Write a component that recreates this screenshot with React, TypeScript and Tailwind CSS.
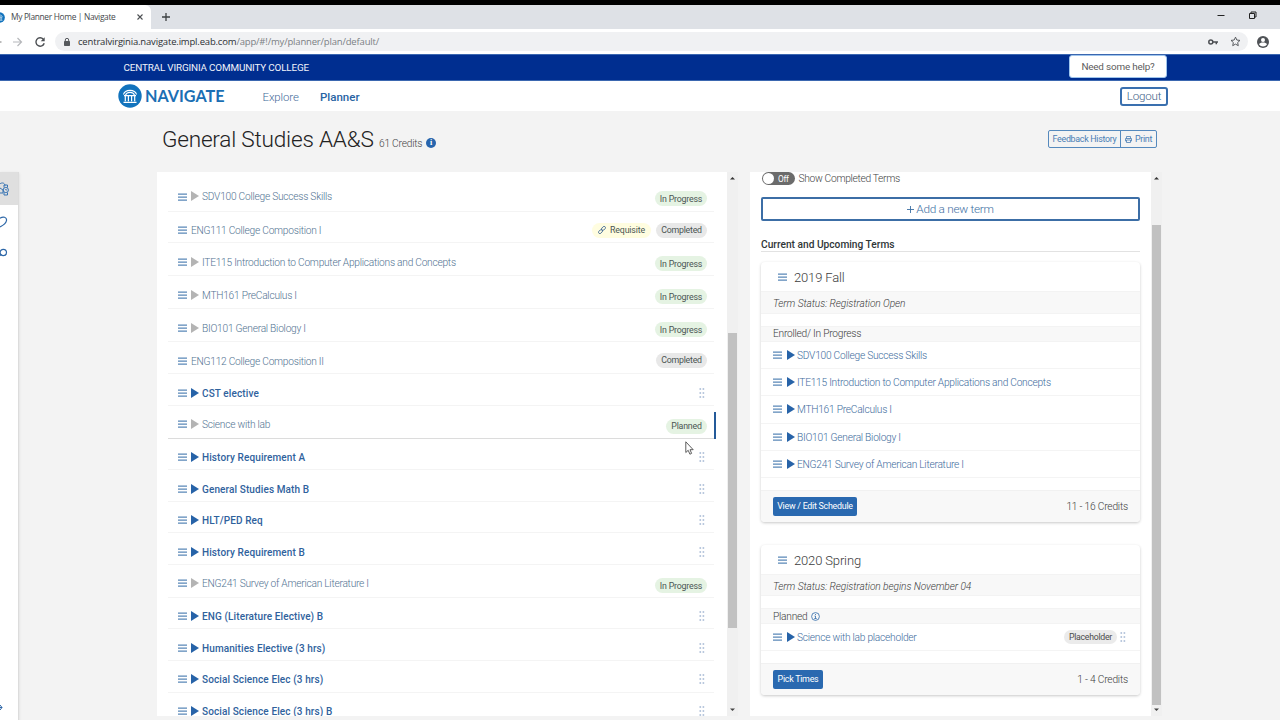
import React from 'react';

type Badge = 'progress' | 'completed' | 'requisite' | 'planned';

interface Course {
  title: string;
  badge?: Badge;
  open?: boolean;
  arrow?: boolean;
}

const COURSES: Course[] = [
  { title: 'SDV100 College Success Skills', badge: 'progress', arrow: true },
  { title: 'ENG111 College Composition I', badge: 'requisite' },
  { title: 'ITE115 Introduction to Computer Applications and Concepts', badge: 'progress', arrow: true },
  { title: 'MTH161 PreCalculus I', badge: 'progress', arrow: true },
  { title: 'BIO101 General Biology I', badge: 'progress', arrow: true },
  { title: 'ENG112 College Composition II', badge: 'completed' },
  { title: 'CST elective', arrow: true, open: true },
  { title: 'Science with lab', badge: 'planned', arrow: true },
  { title: 'History Requirement A', arrow: true, open: true },
  { title: 'General Studies Math B', arrow: true, open: true },
  { title: 'HLT/PED Req', arrow: true, open: true },
  { title: 'History Requirement B', arrow: true, open: true },
  { title: 'ENG241 Survey of American Literature I', badge: 'progress', arrow: true },
  { title: 'ENG (Literature Elective) B', arrow: true, open: true },
  { title: 'Humanities Elective (3 hrs)', arrow: true, open: true },
  { title: 'Social Science Elec (3 hrs)', arrow: true, open: true },
  { title: 'Social Science Elec (3 hrs) B', arrow: true, open: true },
];

const ENROLLED = [
  'SDV100 College Success Skills',
  'ITE115 Introduction to Computer Applications and Concepts',
  'MTH161 PreCalculus I',
  'BIO101 General Biology I',
  'ENG241 Survey of American Literature I',
];

const Burger = () => (
  <svg className="h-[8px] w-[9px] shrink-0" viewBox="0 0 9 8">
    <path d="M0 1.2h9M0 4.2h9M0 7.2h9" stroke="#5a88b8" strokeWidth="1.2" />
  </svg>
);

const Arrow = ({ active }: { active?: boolean }) => (
  <svg className="h-[10px] w-[8px] shrink-0" viewBox="0 0 8 10">
    <path d="M0 0 8 5 0 10z" fill={active ? '#2763a8' : '#b4b4b4'} />
  </svg>
);

const Grip = () => (
  <svg className="h-[10px] w-[6px] shrink-0" viewBox="0 0 6 10">
    {[0, 4, 8].map((y) => (
      <path key={y} d={`M.5 ${y + 1}h1.6M3.6 ${y + 1}h1.6`} stroke="#a3b6d2" strokeWidth="1.5" />
    ))}
  </svg>
);

const College = ({ className }: { className: string }) => (
  <svg className={className} viewBox="0 0 24 24">
    <circle cx="12" cy="12" r="11.7" fill="#1273bd" />
    <path d="M5.5 10.5C7 5 17 5 18.5 10.5M7.5 11c1.5-3.5 7.5-3.5 9 0" fill="none" stroke="#fff" strokeWidth="1.1" />
    <path d="M6 11.7h12M7.3 12v5.300M10.4 12v5.300M13.6 12v5.300M16.7 12v5.300M5.5 18.300h13" stroke="#fff" strokeWidth="1.2" />
  </svg>
);

const Pill = ({ kind }: { kind: Badge }) => {
  if (kind === 'progress' || kind === 'planned') {
    return (
      <span
        className={`mt-[4px] flex h-[15px] items-center justify-center rounded-full bg-[#e5f3e3] pt-px text-[8.8px] tracking-[-0.2px] text-[#4b5553] ${
          kind === 'progress' ? 'w-[52px]' : 'w-[41px]'
        }`}
      >
        {kind === 'progress' ? 'In Progress' : 'Planned'}
      </span>
    );
  }
  return (
    <>
      {kind === 'requisite' && (
        <span className="mr-[5px] flex h-[15px] w-[59px] items-center justify-center gap-[4px] rounded-full bg-[#fffde0] text-[8.8px] tracking-[-0.16px] text-[#4b5553]">
          <svg className="h-[8px] w-[8px]" viewBox="0 0 16 16" fill="none" stroke="#35608f" strokeWidth="1.6">
            <rect x="6.5" y="2" width="9" height="5.5" rx="2.7" transform="rotate(-45 11 4.75)" />
            <rect x=".5" y="8.5" width="9" height="5.5" rx="2.7" transform="rotate(-45 5 11.25)" />
          </svg>
          Requisite
        </span>
      )}
      <span className="flex h-[15px] w-[51px] items-center justify-center rounded-full bg-[#e8e8e8] text-[8.8px] tracking-[-0.22px] text-[#4b5553]">
        Completed
      </span>
    </>
  );
};

const rowHeight = (course: Course, index: number) => {
  if (index === 0) return 'h-[39.6px] pt-[6px]';
  if (course.badge === 'progress' || course.badge === 'planned') return 'h-[32.9px]';
  return course.badge ? 'h-[31.9px]' : 'h-[31.6px]';
};

const CourseRow = ({ course, index }: { course: Course; index: number }) => (
  <div
    className={`relative flex shrink-0 border-b ${rowHeight(course, index)} ${
      course.badge === 'planned' ? 'border-[#dcdcdc]' : 'border-[#f4f4f4]'
    }`}
  >
    <div className="flex h-[37px] w-full items-center pl-[10px]">
      <Burger />
      <div className="ml-[4px] flex items-center gap-[3px]">
        {course.arrow && <Arrow active={course.open} />}
        <span
          className={`pt-[2px] whitespace-nowrap ${
            course.open
              ? 'text-[10px] font-medium tracking-[0.11px] text-[#2f629d]'
              : 'text-[10.2px] font-light tracking-[-0.25px] text-[#527392]'
          }`}
        >
          {course.title}
        </span>
      </div>
      <div className="ml-auto flex items-center pr-[7px]">
        {course.badge ? (
          <Pill kind={course.badge} />
        ) : (
          <span className="pr-[2px]">
            <Grip />
          </span>
        )}
      </div>
    </div>
    {course.badge === 'planned' && <i className="absolute top-[6px] -right-[2px] h-[27px] w-[2px] bg-[#245a99]" />}
  </div>
);

const Scrollbar = ({ thumb }: { thumb: string }) => (
  <div className="flex w-[11px] shrink-0 flex-col items-center bg-[#f0f0f0] py-[4px]">
    <svg className="h-[4px] w-[5px]" viewBox="0 0 5 4">
      <path d="M0 3.5 2.5 1 5 3.5z" fill="#333" />
    </svg>
    <i className={`block w-[9px] bg-[#c1c1c1] ${thumb}`} />
    <svg className="mt-auto h-[4px] w-[5px]" viewBox="0 0 5 4">
      <path d="M0 .5h5L2.5 3z" fill="#444" />
    </svg>
  </div>
);

interface TermProps {
  name: string;
  status: string;
  statusHeight: string;
  section: React.ReactNode;
  courses: string[];
  placeholder?: boolean;
  action: string;
  actionWidth: string;
  credits: string;
}

const TermCard = ({ name, status, statusHeight, section, courses, placeholder, action, actionWidth, credits }: TermProps) => (
  <div className="flex flex-col rounded-[4px] bg-white font-light text-[#3c3c3c] shadow-[0_1px_3px_rgba(0,0,0,0.22)]">
    <div className="flex h-[29px] items-center gap-[7px] pl-[17px] text-[13px] tracking-[-0.15px]">
      <Burger />
      <span className="pt-[2px]">{name}</span>
    </div>
    <div
      className={`flex items-center border-y border-[#f3f3f3] bg-[#f8f8f8] pt-[3px] pl-[12px] text-[10.2px] tracking-[-0.08px] italic ${statusHeight}`}
    >
      {status}
    </div>
    <div className="h-[12px]" />
    <div className="flex h-[16px] items-center gap-[5px] border-y border-[#f3f3f3] bg-[#f8f8f8] pl-[12px] text-[10.2px] tracking-[-0.24px]">
      <span className="pt-[2px]">{section}</span>
    </div>
    {courses.map((course) => (
      <div key={course} className="flex h-[27.4px] items-center border-b border-[#f4f4f4] pl-[12px]">
        <Burger />
        <span className="ml-[5px]">
          <Arrow active />
        </span>
        <span className="ml-[2px] pt-[2px] text-[10.2px] tracking-[-0.25px] whitespace-nowrap text-[#3e6c9d]">{course}</span>
        {placeholder && (
          <div className="ml-auto flex items-center gap-[3px] pr-[14px]">
            <span className="flex h-[14px] w-[53px] items-center justify-center rounded-full bg-[#ebebeb] text-[8.7px] font-normal tracking-[-0.26px] text-[#4b4b4b]">
              Placeholder
            </span>
            <Grip />
          </div>
        )}
      </div>
    ))}
    <div className="h-[12px]" />
    <div className="flex h-[32px] items-center justify-between rounded-b-[4px] border-t border-[#f1f1f1] bg-[#f8f8f8] px-[12px]">
      <button
        className={`mb-px h-[19px] rounded-[2px] bg-[#2a69b0] text-[8.9px] font-normal tracking-[-0.26px] whitespace-nowrap text-white ${actionWidth}`}
      >
        {action}
      </button>
      <span className="text-[10.2px] tracking-[-0.2px]">{credits}</span>
    </div>
  </div>
);

const BrowserChrome = () => (
  <>
    <div className="h-[5px] bg-black" />
    <div className="flex h-[24px] bg-[#dee1e6]">
      <div className="flex w-[151px] items-center rounded-tr-[6px] bg-white font-['Open_Sans',sans-serif]">
        <College className="-ml-[6px] h-[11px] w-[11px] shrink-0" />
        <span className="ml-[6px] w-[105px] text-[8.4px] tracking-[-0.33px] whitespace-nowrap text-[#45484c]">
          My Planner Home | Navigate
        </span>
        <svg className="ml-[21px] h-[6px] w-[6px]" viewBox="0 0 6 6">
          <path d="m.5.5 5 5m0-5-5 5" stroke="#4c4f53" strokeWidth="1.1" />
        </svg>
      </div>
      <svg className="mt-[8px] ml-[11px] h-[8px] w-[8px]" viewBox="0 0 8 8">
        <path d="M4 0v8M0 4h8" stroke="#3c4043" strokeWidth="1.3" />
      </svg>
      <svg className="mt-[6px] mr-[23px] ml-auto h-[9px] w-[40px]" viewBox="0 0 40 9" fill="none" stroke="#222">
        <path d="M.5 4.5h7M32.5 2.5h5v5h-5zM34 2.5v-1.5h5v5h-1.5" />
      </svg>
    </div>
    <div className="flex h-[25px] items-center bg-white">
      <svg className="h-[12px] w-[48px] shrink-0" viewBox="0 0 48 12" fill="none">
        <path d="M0 6h1.5" stroke="#777" />
        <path d="M13 6h8.5M17.5 2l4 4-4 4" stroke="#b6b8bb" strokeWidth="1.2" />
        <path d="M43.3 3.2A4.2 4.2 0 1 0 44.2 7.2" stroke="#4c4f53" strokeWidth="1.4" />
        <path d="M44.7 1.3v4h-4z" fill="#4c4f53" />
      </svg>
      <div className="ml-[7px] flex h-[19px] w-[1193px] items-center rounded-full bg-[#f0f1f3] font-['Open_Sans',sans-serif]">
        <svg className="ml-[9px] h-[8px] w-[6px]" viewBox="0 0 6 8">
          <rect y="3" width="6" height="5" rx=".7" fill="#56595d" />
          <path d="M1.3 3.5V2a1.7 1.7 0 0 1 3.4 0v1.5" fill="none" stroke="#56595d" />
        </svg>
        <span className="ml-[8px] text-[9.5px] tracking-[-0.18px] whitespace-nowrap text-[#7b7f84]">
          <span className="text-[#2c3034]">centralvirginia.navigate.impl.eab.com</span>/app/#!/my/planner/plan/default/
        </span>
        <svg className="ml-auto h-[8px] w-[10px]" viewBox="0 0 10 8" fill="none" stroke="#4c4f53" strokeWidth="1.5">
          <circle cx="2.8" cy="4" r="2" />
          <path d="M4.8 4H10M8.3 4v2.3" />
        </svg>
        <svg className="mr-[7px] ml-[12px] h-[11px] w-[11px]" viewBox="0 0 24 24" fill="none" stroke="#4c4f53" strokeWidth="2">
          <path d="m12 2.5 2.9 6.3 6.9.8-5.1 4.7 1.4 6.8L12 17.7l-6.1 3.4 1.4-6.8-5.1-4.700 6.900-.8z" />
        </svg>
      </div>
      <svg className="ml-[9px] h-[12px] w-[12px] shrink-0" viewBox="0 0 24 24">
        <circle cx="12" cy="12" r="12" fill="#505357" />
        <circle cx="12" cy="8" r="4" fill="#fff" />
        <path d="M4 16.5c2-5 14-5 16 0-4 6-12 6-16 0z" fill="#fff" />
      </svg>
    </div>
  </>
);

const SideRail = () => (
  <div className="h-[549px] w-[19px] shrink-0 overflow-hidden border-r border-[#dcdcdc] bg-white shadow-sm">
    <div className="h-[33px] bg-[#dfdfdf] pt-[10px]">
      <svg className="h-[14px] w-[9px]" viewBox="0 0 9 14" fill="none" stroke="#3974b3">
        <path d="M0 1.8c2-1.5 5-1 5 2M0 6l3 2v3H0" />
        <circle cx="5.8" cy="8" r="2.6" />
        <path d="M4 5.5V3h3.5v2.5M4 10.5V13h3.5v-2.5M5.8 7v1h1" />
      </svg>
    </div>
    <svg className="mt-[11px] h-[12px] w-[8px]" viewBox="0 0 8 12" fill="none" stroke="#2c66a7" strokeWidth="1.2">
      <path d="M0 2.3C3 0 7 1 6.5 4.5 6 7.5 3 9.5 0 11" />
    </svg>
    <svg className="mt-[20px] h-[9px] w-[8px]" viewBox="0 0 8 9" fill="none" stroke="#2c66a7" strokeWidth="1.2">
      <circle cx="3.3" cy="4.5" r="3.2" />
      <path d="M0 7.5 1.5 6.5" />
    </svg>
    <svg className="mt-[447px] h-[7px] w-[4px]" viewBox="0 0 4 7" fill="none" stroke="#2c66a7">
      <path d="M0 3.5h2M0 1l2 2.5L0 6" />
    </svg>
  </div>
);

export default function App() {
  return (
    <div className="relative flex h-[720px] w-[1280px] flex-col overflow-hidden bg-[#f3f3f3] font-[Roboto,'Liberation_Sans',sans-serif] leading-none">
      <BrowserChrome />

      {/* College banner */}
      <div className="flex h-[27px] justify-between border-y border-[#3b67b0] bg-[#002e90] pr-[113px] pl-[123.5px]">
        <span className="self-center pt-px text-[9.9px] tracking-[-0.16px] whitespace-nowrap text-[#f0f3fa]">
          CENTRAL VIRGINIA COMMUNITY COLLEGE
        </span>
        <button className="h-[23px] w-[98px] rounded-[3px] border border-[#9fc5ed] bg-white pt-px text-[9.9px] tracking-[-0.18px] text-[#5c5c5c]">
          Need some help?
        </button>
      </div>

      {/* Main navigation */}
      <div className="flex h-[30px] items-center bg-white pr-[112px] pl-[118px]">
        <College className="h-[24px] w-[24px]" />
        <span className="ml-[3px] w-[80px] pt-px font-[Lato,sans-serif] text-[16.2px] font-bold text-[#1b6fb4]">NAVIGATE</span>
        <span className="ml-[37.5px] w-[37.5px] pt-[3px] text-[11.4px] font-light tracking-[-0.1px] text-[#3f6a99]">Explore</span>
        <span className="ml-[20px] pt-[3px] text-[11.5px] font-medium text-[#2763a3]">Planner</span>
        <button className="mt-px ml-auto h-[19px] w-[48px] rounded-[3px] border-2 border-[#3a70af] pt-px text-[11.6px] font-light tracking-[-0.2px] text-[#3f5f88]">
          Logout
        </button>
      </div>

      {/* Plan heading */}
      <div className="flex h-[61px] justify-between pr-[123px] pl-[162px]">
        <div className="flex items-baseline pt-[18px] font-light text-[#222]">
          <h1 className="w-[212px] text-[22.6px] tracking-[-0.22px] whitespace-nowrap">General Studies AA&amp;S</h1>
          <span className="ml-[5px] text-[10.2px] tracking-[-0.22px] whitespace-nowrap text-[#444]">61 Credits</span>
          <span className="relative -top-[8px] ml-[4px] flex h-[10px] w-[10px] items-center justify-center self-center rounded-full bg-[#2765ad] font-['Liberation_Serif',serif] text-[8px] font-bold text-white">
            i
          </span>
        </div>
        <div className="mt-[19px] flex h-[18px] rounded-[2px] border border-[#5589bd] text-[8.9px] tracking-[-0.3px] text-[#4a7eb5]">
          <button className="w-[72px] border-r border-[#5589bd] whitespace-nowrap">Feedback History</button>
          <button className="flex w-[35px] items-center justify-center gap-[3px]">
            <svg className="h-[7px] w-[7px]" viewBox="0 0 7 7" fill="none" stroke="#4a7eb5" strokeWidth=".8">
              <path d="M1.5 2.5V.5h4v2M1.5 5H.5V2.5h6V5h-1M1.5 4h4v2.5h-4z" />
            </svg>
            Print
          </button>
        </div>
      </div>

      <div className="flex min-h-0 flex-1">
        <SideRail />

        {/* Requirements */}
        <div className="ml-[138px] flex h-[544px] w-[581px] bg-white">
          <div className="flex min-w-0 flex-1 flex-col overflow-hidden pr-[13px] pl-[11px]">
            {COURSES.map((course, index) => (
              <CourseRow key={course.title} course={course} index={index} />
            ))}
          </div>
          <Scrollbar thumb="mt-[153px] h-[295px]" />
        </div>

        {/* Terms */}
        <div className="ml-[12px] flex h-[544px] w-[412px] bg-white">
          <div className="flex flex-1 flex-col pr-[11px] pl-[11px]">
            <div className="flex h-[13px] items-center font-light">
              <span className="ml-px flex h-[13px] w-[33px] items-center rounded-full bg-[#6b6b6b]">
                <i className="ml-px h-[11px] w-[11px] rounded-full bg-white" />
                <span className="ml-[4px] pt-px text-[8.3px] font-normal tracking-[-0.3px] text-white">Off</span>
              </span>
              <span className="ml-[3.5px] pt-[2px] text-[10.3px] tracking-[-0.34px] whitespace-nowrap text-[#444]">
                Show Completed Terms
              </span>
            </div>
            <button className="mt-[12px] h-[24px] shrink-0 rounded-[2px] border-2 border-[#3c6ea6] pt-px text-[11.8px] font-light tracking-[-0.28px] text-[#3d6fa3]">
              <svg className="mr-[2px] inline h-[7px] w-[7px] align-[0px]" viewBox="0 0 7 7">
                <path d="M3.5 0v7M0 3.5h7" stroke="#3d6fa3" strokeWidth=".9" />
              </svg>
              Add a new term
            </button>
            <div className="mt-[17px] h-[14px] border-b border-[#e2e2e2] pt-[2px] text-[10.2px] font-medium text-[#303638]">
              Current and Upcoming Terms
            </div>
            <div className="mt-[10px] flex flex-col gap-[23px]">
              <TermCard
                name="2019 Fall"
                status="Term Status: Registration Open"
                statusHeight="h-[22.5px]"
                section="Enrolled/ In Progress"
                courses={ENROLLED}
                action="View / Edit Schedule"
                actionWidth="w-[84px]"
                credits="11 - 16 Credits"
              />
              <TermCard
                name="2020 Spring"
                status="Term Status: Registration begins November 04"
                statusHeight="h-[21.5px]"
                section={
                  <span className="flex items-center gap-[4px]">
                    Planned
                    <svg className="h-[9px] w-[9px]" viewBox="0 0 9 9" fill="none" stroke="#2f69aa" strokeWidth=".8">
                      <circle cx="4.5" cy="4.5" r="3.9" />
                      <path d="M4.5 2v1M3.5 4h1v2.5M3.3 6.5h2.4" />
                    </svg>
                  </span>
                }
                courses={['Science with lab placeholder']}
                placeholder
                action="Pick Times"
                actionWidth="w-[50px]"
                credits="1 - 4 Credits"
              />
            </div>
          </div>
          <Scrollbar thumb="mt-[45px] h-[480px]" />
        </div>
      </div>

      {/* Mouse pointer */}
      <svg className="absolute top-[441px] left-[685px] h-[14px] w-[9px]" viewBox="0 0 9 14">
        <path d="M.8.8v10.7l2.4-2.2 1.7 3.9 1.7-.8L5 8.7h3.2z" fill="#fff" stroke="#4c4c4c" strokeWidth=".9" />
      </svg>
    </div>
  );
}
